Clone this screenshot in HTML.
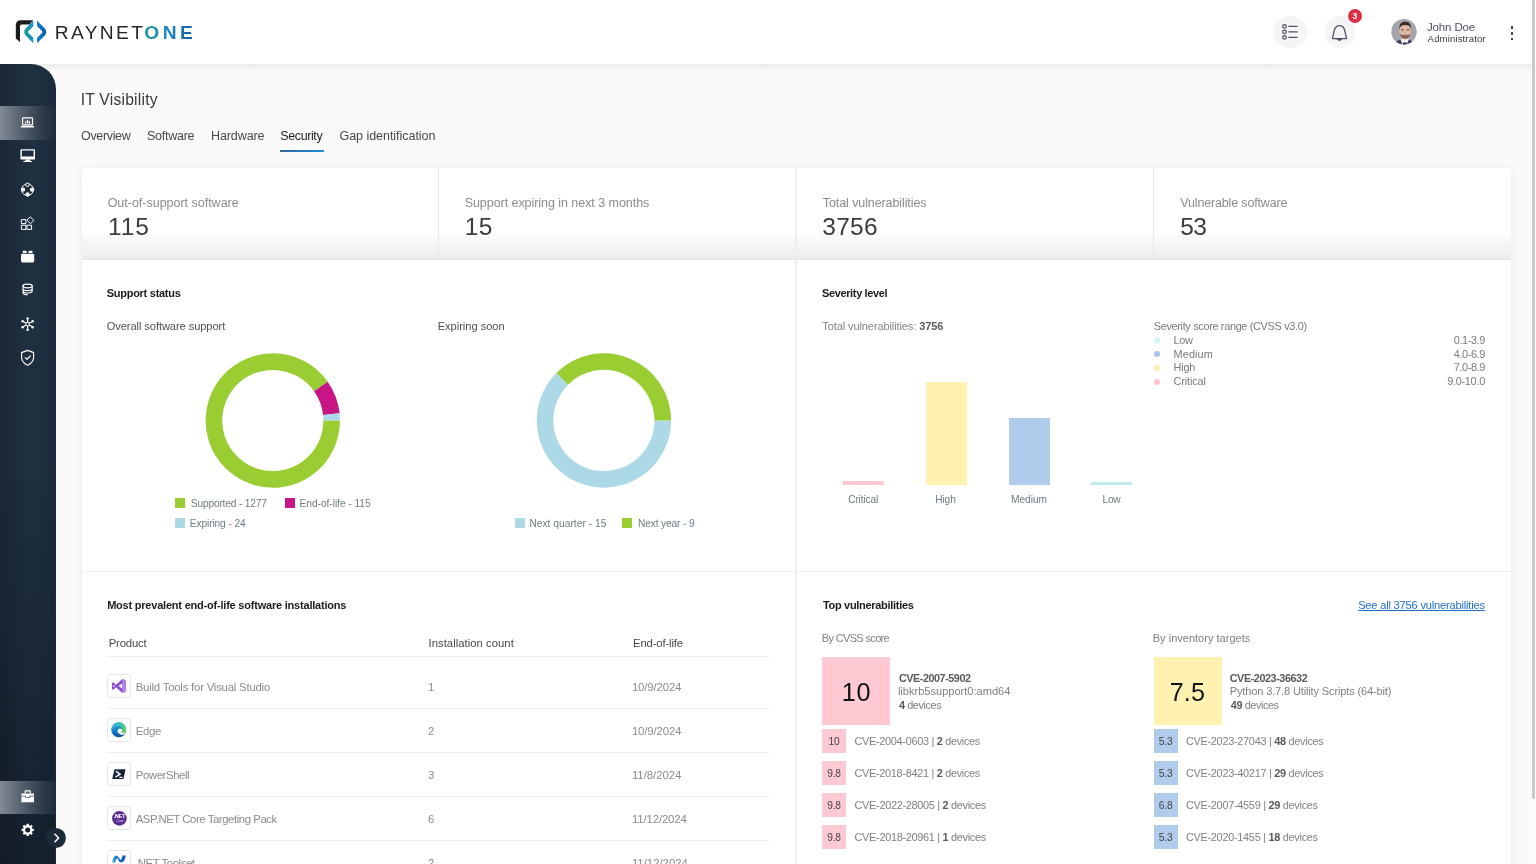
<!DOCTYPE html>
<html lang="en">
<head>
<meta charset="utf-8">
<title>IT Visibility - Security</title>
<style>
*{box-sizing:border-box;margin:0;padding:0}
html,body{width:1536px;height:864px;overflow:hidden}
body{position:relative;background:#fafafa;font-family:"Liberation Sans",sans-serif;color:#444;font-size:12px;line-height:1}
.a{position:absolute}
.t{position:absolute;white-space:nowrap;line-height:1;filter:blur(.3px)}
b{font-weight:700}
#hdr{position:absolute;left:0;top:0;width:1536px;height:64px;background:#fff;z-index:5}
#hdrshadow{position:absolute;left:0;top:64px;width:1536px;height:8px;background:linear-gradient(#eaeaea,#f2f2f2 40%,#fafafa);z-index:1}
#side{position:absolute;left:0;top:64px;width:55.6px;height:800px;background:linear-gradient(90deg,#1a2735 0%,#1f3042 55%,#1c2b3b 100%);border-top-right-radius:25px;z-index:6;overflow:hidden}
#side .fade{position:absolute;left:0;top:0;width:55px;height:800px;background:linear-gradient(180deg,rgba(0,0,0,0) 50%,rgba(12,18,26,.5) 100%)}
.hl{position:absolute;left:0;width:55.3px;height:33.8px;background:linear-gradient(90deg,#7f8a95 0%,#4c5865 48%,#293746 82%,#1f2e3d 100%)}
#card{position:absolute;left:81.6px;top:168.3px;width:1429.6px;height:720px;background:#fff;border-radius:3px 3px 0 0;box-shadow:0 1px 10px rgba(0,0,0,.07)}
.sum{position:absolute;left:81.6px;top:168.3px;width:1429.6px;height:90.7px;border-radius:3px 3px 0 0;background:linear-gradient(180deg,#fff 0%,#fff 68%,#ececec 100%)}
.vl{position:absolute;width:1px;background:#ececec}
.hln{position:absolute;height:1px;background:#efefef}
.sq{position:absolute;width:10px;height:10px}
.dot{position:absolute;width:6.4px;height:6.4px;border-radius:50%}
.pico{position:absolute;width:23.8px;height:23.8px;border:1.3px solid #e6e6e6;border-radius:3px;background:#fff;overflow:hidden}
.sb{position:absolute;width:24px;height:24px}
.bb{position:absolute;width:68px;height:68px}
svg{position:absolute;overflow:visible}
</style>
</head>
<body>
<div id="hdrshadow"></div>
<div id="hdr">
  <!-- logo mark -->
  <svg style="left:14px;top:18px" width="36" height="28" viewBox="14 18 36 28">
    <defs>
      <linearGradient id="lg1" gradientUnits="userSpaceOnUse" x1="24" y1="32" x2="33.3" y2="32"><stop offset="0" stop-color="#1a9690"/><stop offset=".45" stop-color="#1897ac"/><stop offset="1" stop-color="#1590cc"/></linearGradient>
      <linearGradient id="lg2" gradientUnits="userSpaceOnUse" x1="37.1" y1="32" x2="46.7" y2="32"><stop offset="0" stop-color="#1180cc"/><stop offset=".55" stop-color="#0c6cb8"/><stop offset="1" stop-color="#0a4f9a"/></linearGradient>
      <clipPath id="lc1"><rect x="20" y="18" width="13.3" height="28"/></clipPath>
      <clipPath id="lc2"><rect x="37.1" y="18" width="13" height="28"/></clipPath>
    </defs>
    <path d="M15.8 38.6 V25.6 Q15.8 20.25 21.1 20.25 H33.3 L29.4 24.4 H21.6 Q20 24.4 20 26 V42.1 Z" fill="#1c1c1c"/>
    <path d="M36 20.65 L26.97 29.85 A3 3 0 0 0 26.97 34.05 L36 43.25" fill="none" stroke="url(#lg1)" stroke-width="3.8" clip-path="url(#lc1)"/>
    <path d="M34.4 20.65 L43.43 29.85 A3 3 0 0 1 43.43 34.05 L34.4 43.25" fill="none" stroke="url(#lg2)" stroke-width="3.8" clip-path="url(#lc2)"/>
  </svg>
  <!-- list button -->
  <div class="a" style="left:1273px;top:16px;width:34.5px;height:32px;border-radius:50%;background:#f5f5f5"></div>
  <svg style="left:1280px;top:22px" width="20" height="20" viewBox="1280 22 20 20" fill="none" stroke="#4a5260" stroke-width="1.25">
    <circle cx="1284.5" cy="26.3" r="1.8"/><circle cx="1284.5" cy="31.8" r="1.8"/><circle cx="1284.5" cy="37.4" r="1.8"/>
    <path d="M1288.3 26.3H1297.6M1288.3 31.8H1297.6M1288.3 37.4H1297.6"/>
  </svg>
  <!-- bell button -->
  <div class="a" style="left:1323.5px;top:16px;width:32px;height:32px;border-radius:50%;background:#f5f5f5"></div>
  <svg style="left:1330px;top:23px" width="20" height="20" viewBox="1330 23 20 20" fill="none" stroke="#4a5260" stroke-width="1.3" stroke-linejoin="round">
    <path d="M1333.4 38.6 Q1332.2 38.6 1332.6 37.4 C1334.2 33.6 1333.4 25.6 1339.5 25.6 C1345.6 25.6 1344.8 33.6 1346.4 37.4 Q1346.8 38.6 1345.6 38.6 Z"/>
    <path d="M1337.6 39.2 Q1339.5 41.6 1341.4 39.2 Z" fill="#4a5260"/>
  </svg>
  <div class="a" style="left:1347.9px;top:9.1px;width:14px;height:14px;border-radius:50%;background:#dc2f45"></div>
  <!-- avatar -->
  <svg style="left:1390.6px;top:19px" width="26" height="26" viewBox="0 0 26 26">
    <defs><clipPath id="av"><circle cx="13" cy="12.8" r="12.7"/></clipPath><filter id="avb" x="-10%" y="-10%" width="120%" height="120%"><feGaussianBlur stdDeviation="0.45"/></filter></defs>
    <g clip-path="url(#av)">
      <rect width="26" height="26" fill="#a6a5ab"/>
      <g filter="url(#avb)">
      <path d="M3.6 26 Q5 21.6 9.4 20.6 L13.6 25 L17.6 20.6 Q21.4 21.4 22.6 26 Z" fill="#3a4258"/>
      <path d="M9.6 20.4 L10.6 19 H17 L17.8 20.4 L15.6 26 H11.6 Z" fill="#f1f2f5"/>
      <path d="M12.2 23.6 H15.6 L16.2 26 H11.8 Z" fill="#232b45"/>
      <rect x="11.2" y="16" width="5.6" height="4.2" fill="#c89f88"/>
      <ellipse cx="14.2" cy="12.8" rx="5.8" ry="7.1" fill="#e0b9a4"/>
      <path d="M8.3 11 Q7.4 3.2 14.2 2.6 Q21 3.2 20.1 11 Q19.6 7.4 17.8 6.6 Q14.2 5.6 10.6 6.6 Q8.8 7.4 8.3 11 Z" fill="#3b2a24"/>
      <path d="M8.7 13.6 Q9.2 19.4 14.2 19.8 Q19.2 19.4 19.7 13.6 Q18.6 16.6 16.6 16 Q14.2 15.2 11.8 16 Q9.8 16.6 8.7 13.6 Z" fill="#7a5545" opacity=".9"/>
      <path d="M12 16.6 Q14.2 18 16.4 16.6 Q14.2 17.2 12 16.6Z" fill="#f3e9e4"/>
      <path d="M10 10.9 H12.8 M15.6 10.9 H18.4" stroke="#5a4036" stroke-width="0.9" fill="none"/>
      </g>
    </g>
  </svg>
  <!-- kebab -->
  <div class="a" style="left:1510.7px;top:26.3px;width:2.6px;height:2.6px;background:#4a4a4a"></div>
  <div class="a" style="left:1510.7px;top:32px;width:2.6px;height:2.6px;background:#4a4a4a"></div>
  <div class="a" style="left:1510.7px;top:37.7px;width:2.6px;height:2.6px;background:#4a4a4a"></div>
</div>
<!-- scrollbar -->
<div class="a" style="left:1531.6px;top:64px;width:4.4px;height:800px;background:#fcfcfc;z-index:7"></div>
<div class="a" style="left:1532.2px;top:0;width:3px;height:799px;background:#c9c9c9;border-radius:0 0 2px 2px;z-index:8"></div>

<!-- sidebar -->
<div id="side">
  <div class="fade"></div>
  <div class="hl" style="top:42.1px"></div>
  <div class="hl" style="top:716.7px"></div>
</div>
<svg style="left:0;top:64px;z-index:7" width="70" height="800" viewBox="0 64 70 800">
  <g fill="none" stroke="#fff" stroke-width="1.2" stroke-linejoin="round" stroke-linecap="round">
    <!-- 1 laptop chart -->
    <rect x="22.6" y="117.8" width="9.9" height="7" rx="0.8"/>
    <path d="M21.7 126.7 H33.3" stroke-width="1.7"/>
    <path d="M25.6 123.4V121.4M27.5 123.4V120M29.4 123.4V121" stroke-width="1.3" stroke-linecap="butt"/>
    <!-- 3 ring nodes -->
    <circle cx="27.55" cy="189.7" r="5.9" stroke-width="0.95"/>
    <!-- 4 squares + diamond -->
    <g stroke-width="1"><rect x="21.7" y="219.6" width="4.2" height="4"/><rect x="21.7" y="225.2" width="4.2" height="4.2"/><rect x="27.3" y="225.2" width="4.3" height="4.2"/>
    <path d="M30.5 217.1 L33.8 220.4 L30.5 223.7 L27.2 220.4 Z"/></g>
    <!-- 6 database -->
    <ellipse cx="27.6" cy="286" rx="4.6" ry="1.8"/>
    <path d="M23 286 V292.6 Q23.2 294.6 27.6 294.8 M32.2 286 V291 M23 288.8 Q23.4 290.6 27.6 290.6 Q31.8 290.6 32.2 288.8 M23 291.2 Q23.4 293 27.6 293 Q31.8 293 32.2 291.2" stroke-width="1.1"/>
    <!-- 7 hub -->
    <path d="M27.6 319.4 V329 M23.6 321.8 L31.8 326.6 M23.6 326.6 L31.8 321.8" stroke-width="1.2"/>
    <!-- 8 shield -->
    <path d="M27.6 350.4 L33.6 352.6 V357.4 Q33.4 362.4 27.6 365.2 Q21.8 362.4 21.6 357.4 V352.6 Z" stroke-width="1.15"/>
    <path d="M25.2 357.6 L27 359.4 L30.2 356" stroke-width="1.15"/>
  </g>
  <g fill="#fff">
    <!-- 2 monitor -->
    <path d="M21.6 149.2 H33.8 Q35 149.2 35 150.4 V158.4 Q35 159.6 33.8 159.6 H21.6 Q20.4 159.6 20.4 158.4 V150.4 Q20.4 149.2 21.6 149.2 Z M21.8 150.6 V156.6 H33.6 V150.6 Z" fill-rule="evenodd"/>
    <path d="M25.6 159.6 H29.8 L30.4 161 H25 Z M23.4 161 H32 V161.9 H23.4 Z"/>
    <!-- 3 nodes -->
    <circle cx="23" cy="189.7" r="2.15"/><circle cx="32.1" cy="189.7" r="2.15"/><circle cx="27.55" cy="194.5" r="2.15"/>
    <circle cx="27.55" cy="184.8" r="1.75" fill="#1f3042" stroke="#fff" stroke-width="1"/>
    <!-- 5 lego -->
    <rect x="21" y="253.8" width="13.2" height="8.6" rx="1.4"/>
    <rect x="22.8" y="250.7" width="3.8" height="2.4" rx="0.5"/><rect x="28.6" y="250.7" width="3.8" height="2.4" rx="0.5"/>
    <!-- 7 hub nodes -->
    <circle cx="27.6" cy="324.2" r="1.7" fill="#1f3042" stroke="#fff" stroke-width="1"/>
    <circle cx="27.6" cy="318.4" r="1.2"/><circle cx="27.6" cy="329.9" r="1.2"/>
    <circle cx="22.6" cy="321.2" r="1.2"/><circle cx="32.7" cy="327.2" r="1.2"/>
    <circle cx="22.6" cy="327.2" r="1.2"/><circle cx="32.7" cy="321.2" r="1.2"/>
    <!-- 9 toolbox -->
    <path d="M21.4 793.4 H34 V795.8 H29.4 V797 H26 V795.8 H21.4 Z M21.4 796.6 H25.2 V797.8 H30.2 V796.6 H34 V802.3 H21.4 Z"/>
    <path d="M24.6 793.4 V791 Q24.6 790.3 25.3 790.3 H30.1 Q30.8 790.3 30.8 791 V793.4 H29.6 V791.5 H25.8 V793.4 Z"/>
    <!-- 10 gear -->
    <path fill-rule="evenodd" d="M32.23 828.65 L33.81 828.85 L33.81 830.95 L32.23 831.15 L31.79 832.22 L32.76 833.48 L31.28 834.96 L30.02 833.99 L28.95 834.43 L28.75 836.01 L26.65 836.01 L26.45 834.43 L25.38 833.99 L24.12 834.96 L22.64 833.48 L23.61 832.22 L23.17 831.15 L21.59 830.95 L21.59 828.85 L23.17 828.65 L23.61 827.58 L22.64 826.32 L24.12 824.84 L25.38 825.81 L26.45 825.37 L26.65 823.79 L28.75 823.79 L28.95 825.37 L30.02 825.81 L31.28 824.84 L32.76 826.32 L31.79 827.58 Z M30.20 829.90 A2.5 2.5 0 1 0 25.20 829.90 A2.5 2.5 0 1 0 30.20 829.90 Z"/>
  </g>
  <!-- expand -->
  <circle cx="55.8" cy="838" r="10.1" fill="#1c2a39"/>
  <path d="M54.6 833.8 L58.6 838 L54.6 842.2" fill="none" stroke="#fff" stroke-width="1.5"/>
</svg>
<!-- tab underline -->
<div class="a" style="left:280px;top:149.8px;width:44px;height:2.2px;background:linear-gradient(90deg,#35659a,#1b8fd8)"></div>
<div id="card"></div>
<div class="sum"></div>
<div class="hln" style="left:81.6px;top:259px;width:1429.6px;background:#e6e3e3"></div>
<div class="vl" style="left:438px;top:168px;height:91px;background:#e8e8e8"></div>
<div class="vl" style="left:1153px;top:168px;height:91px;background:#e8e8e8"></div>
<div class="vl" style="left:795.3px;top:168px;height:696px;width:1.4px;background:#eeeeee"></div>
<div class="hln" style="left:81.6px;top:571px;width:1429.6px;background:#eeeeee"></div>

<!-- donuts -->
<svg style="left:200px;top:348px" width="480" height="146" viewBox="200 348 480 146">
  <path d="M331.70 420.50 A58.9 58.9 0 1 1 320.85 386.43" fill="none" stroke="#9acd32" stroke-width="16.6"/>
<path d="M320.85 386.43 A58.9 58.9 0 0 1 331.37 414.24" fill="none" stroke="#c71585" stroke-width="16.6"/>
<path d="M331.37 414.24 A58.9 58.9 0 0 1 331.70 420.50" fill="none" stroke="#add8e6" stroke-width="16.6"/>
<path d="M662.80 420.50 A58.9 58.9 0 1 1 562.25 378.85" fill="none" stroke="#add8e6" stroke-width="16.6"/>
<path d="M562.25 378.85 A58.9 58.9 0 0 1 662.80 420.50" fill="none" stroke="#9acd32" stroke-width="16.6"/>
</svg>
<!-- legends -->
<div class="sq" style="left:175px;top:498px;background:#9acd32"></div>
<div class="sq" style="left:284.6px;top:498px;background:#c71585"></div>
<div class="sq" style="left:175px;top:518px;background:#add8e6"></div>
<div class="sq" style="left:514.5px;top:518.4px;background:#add8e6"></div>
<div class="sq" style="left:622.3px;top:518.4px;background:#9acd32"></div>

<!-- bars -->
<div class="a" style="left:843.2px;top:480.8px;width:40.8px;height:4px;background:#ffc9d3"></div>
<div class="a" style="left:925.5px;top:382.1px;width:41px;height:102.7px;background:#fff2b0"></div>
<div class="a" style="left:1008.8px;top:417.5px;width:41px;height:67.3px;background:#afccec"></div>
<div class="a" style="left:1091px;top:482.2px;width:41px;height:2.6px;background:#bdebef"></div>
<!-- severity dots -->
<div class="dot" style="left:1154px;top:337.2px;background:#d6f3f5"></div>
<div class="dot" style="left:1154px;top:351.1px;background:#a9c6ec"></div>
<div class="dot" style="left:1154px;top:364.7px;background:#fff0a8"></div>
<div class="dot" style="left:1154px;top:378.6px;background:#ffc2cf"></div>

<!-- table lines -->
<div class="hln" style="left:107px;top:656px;width:663px"></div>
<div class="hln" style="left:107px;top:708px;width:663px"></div>
<div class="hln" style="left:107px;top:752px;width:663px"></div>
<div class="hln" style="left:107px;top:796px;width:663px"></div>
<div class="hln" style="left:107px;top:840px;width:663px"></div>
<!-- product icons -->
<div class="pico" style="left:107.3px;top:674.1px">
  <svg style="left:2.9px;top:2.9px" width="16" height="16" viewBox="0 0 14 14"><path d="M10 0.8 L13 2.2 V11.8 L10 13.2 L4.4 8.2 L2 10.2 L0.8 9.6 V4.4 L2 3.8 L4.4 5.8 Z M10 4.6 L6.6 7 L10 9.4 Z M2.2 5.8 V8.2 L3.6 7 Z" fill="#8a4fd0" fill-rule="evenodd"/><path d="M10 0.8 L13 2.2 V11.8 L10 13.2 Z" fill="#b383ea"/></svg>
</div>
<div class="pico" style="left:107.3px;top:718.1px">
  <svg style="left:3.2px;top:3.3px" width="15.4" height="15.4" viewBox="0 0 15 15"><defs><linearGradient id="eg" x1="0.2" y1="0" x2="0.6" y2="1"><stop offset="0" stop-color="#36b6e8"/><stop offset=".55" stop-color="#1479c8"/><stop offset="1" stop-color="#0b4a94"/></linearGradient><linearGradient id="eg2" x1="0" y1="0.3" x2="1" y2="0.6"><stop offset="0" stop-color="#2fb4dc"/><stop offset=".6" stop-color="#3cc8a0"/><stop offset="1" stop-color="#5bd85c"/></linearGradient></defs><circle cx="7.5" cy="7.5" r="7.3" fill="url(#eg)"/><path d="M7.5 .2 A7.3 7.3 0 0 1 14.8 7.5 Q14.7 9.8 12.8 10.4 Q10.4 10.9 9.3 9.5 Q11.2 8.8 10.9 6.8 Q10.2 4 6.9 3.9 Q3.4 4 1 7 Q1.6 0.8 7.5 .2Z" fill="url(#eg2)"/><path d="M6.3 9 Q6.4 6.6 8.7 6.3 Q10.8 6.4 10.9 7.9 Q10.8 9.5 9.3 9.5 Q10.4 10.9 12.8 10.4 Q13.6 10.2 14.2 9.6 Q13 13.2 9.6 13.4 Q6.4 13 6.3 9Z" fill="#fff"/><path d="M6.3 9 Q6.3 12.4 9.2 13.6 Q11.6 14 13.4 12.2 Q11.2 13 9.2 12.2 Q7 11.2 6.3 9Z" fill="#0d4f9a"/></svg>
</div>
<div class="pico" style="left:107.3px;top:762.1px">
  <svg style="left:3.8px;top:5.6px" width="13.8" height="10.4" viewBox="0 0 14 10.5"><defs><linearGradient id="psg" x1="0" y1="0" x2="1" y2="1"><stop offset="0" stop-color="#2a4468"/><stop offset=".5" stop-color="#13213a"/><stop offset="1" stop-color="#0c1526"/></linearGradient></defs><path d="M2.4 0.3 H13.7 L11.6 10.2 H0.3 Z" fill="url(#psg)"/><path d="M4.2 2.3 L8.2 5.2 L3.5 8.2" fill="none" stroke="#fff" stroke-width="1.5"/><path d="M7.4 8.4 H10.8" stroke="#fff" stroke-width="1.3"/></svg>
</div>
<div class="pico" style="left:107.3px;top:806.1px">
  <svg style="left:3.8px;top:3.8px" width="14.8" height="14.8" viewBox="0 0 15 15"><circle cx="7.5" cy="7.5" r="7.4" fill="#5c2d91"/></svg>
  <div class="t" style="left:5.4px;top:7.2px;font-size:5.7px;font-weight:700;color:#fff;letter-spacing:-.42px">.NET</div>
  <div class="t" style="left:8.3px;top:12.5px;font-size:3.2px;color:#e6dcf2">Core</div>
</div>
<div class="pico" style="left:107.3px;top:850.1px">
  <svg style="left:3.7px;top:3.9px" width="14" height="8" viewBox="0 0 14 8"><defs><linearGradient id="ntg" x1="0" y1="0" x2="1" y2="0"><stop offset="0" stop-color="#2bb5d8"/><stop offset=".35" stop-color="#1a72c8"/><stop offset="1" stop-color="#1458b4"/></linearGradient></defs><path d="M0.2 7.6 Q1.4 0.4 4.4 0.6 Q6.2 0.8 7.6 3.8 Q8.2 5 8.8 4.8 Q9.8 4.4 10.6 0.6 H13.9 Q12.4 7.6 9.4 7.6 Q7.4 7.6 6 4.4 Q5.4 3.2 4.8 3.4 Q3.8 3.8 3.2 7.6 Z" fill="url(#ntg)"/></svg>
</div>

<!-- vuln boxes -->
<div class="bb" style="left:822px;top:657.2px;background:#ffc9d3"></div>
<div class="sb" style="left:822px;top:729px;background:#ffc9d3"></div>
<div class="sb" style="left:822px;top:761px;background:#ffc9d3"></div>
<div class="sb" style="left:822px;top:793px;background:#ffc9d3"></div>
<div class="sb" style="left:822px;top:825px;background:#ffc9d3"></div>
<div class="bb" style="left:1153.6px;top:657.2px;background:#fff2b0"></div>
<div class="sb" style="left:1153.6px;top:729px;background:#afccec"></div>
<div class="sb" style="left:1153.6px;top:761px;background:#afccec"></div>
<div class="sb" style="left:1153.6px;top:793px;background:#afccec"></div>
<div class="sb" style="left:1153.6px;top:825px;background:#afccec"></div>
<div class="t" id="title" style="top:92.01px;font-size:15.70px;color:#3a3a3a;left:80.66px;letter-spacing:0.214px;">IT Visibility</div>
<div class="t" id="tab1" style="top:130.01px;font-size:12.50px;color:#484848;left:81.05px;letter-spacing:-0.349px;">Overview</div>
<div class="t" id="tab2" style="top:130.01px;font-size:12.50px;color:#484848;left:147.05px;letter-spacing:-0.271px;">Software</div>
<div class="t" id="tab3" style="top:130.01px;font-size:12.50px;color:#484848;left:211.05px;letter-spacing:-0.105px;">Hardware</div>
<div class="t" id="tab4" style="top:130.01px;font-size:12.50px;color:#1f1f1f;left:280.25px;letter-spacing:-0.387px;">Security</div>
<div class="t" id="tab5" style="top:130.01px;font-size:12.50px;color:#484848;left:339.45px;letter-spacing:-0.032px;">Gap identification</div>
<div class="t" id="s1l" style="top:197.01px;font-size:12.50px;color:#8b8b8b;left:107.65px;letter-spacing:-0.012px;">Out-of-support software</div>
<div class="t" id="s1n" style="top:215.01px;font-size:24.50px;color:#3c3c3c;left:107.93px;letter-spacing:0.994px;">115</div>
<div class="t" id="s2l" style="top:197.01px;font-size:12.50px;color:#8b8b8b;left:464.65px;letter-spacing:-0.049px;">Support expiring in next 3 months</div>
<div class="t" id="s2n" style="top:215.01px;font-size:24.50px;color:#3c3c3c;left:464.73px;letter-spacing:0.384px;">15</div>
<div class="t" id="s3l" style="top:197.01px;font-size:12.50px;color:#8b8b8b;left:822.85px;letter-spacing:-0.098px;">Total vulnerabilities</div>
<div class="t" id="s3n" style="top:215.01px;font-size:24.50px;color:#3c3c3c;left:822.33px;letter-spacing:0.245px;">3756</div>
<div class="t" id="s4l" style="top:197.01px;font-size:12.50px;color:#8b8b8b;left:1180.25px;letter-spacing:-0.155px;">Vulnerable software</div>
<div class="t" id="s4n" style="top:215.01px;font-size:24.50px;color:#3c3c3c;left:1180.13px;letter-spacing:-0.416px;">53</div>
<div class="t" id="h1" style="top:288.00px;font-size:11.00px;color:#1c1c1c;font-weight:700;left:106.74px;letter-spacing:-0.271px;">Support status</div>
<div class="t" id="h1a" style="top:321.00px;font-size:11.10px;color:#505050;left:106.73px;letter-spacing:-0.075px;">Overall software support</div>
<div class="t" id="h1b" style="top:321.00px;font-size:11.10px;color:#505050;left:437.73px;letter-spacing:-0.026px;">Expiring soon</div>
<div class="t" id="lg1" style="top:499.01px;font-size:10.20px;color:#6c7e82;left:190.79px;letter-spacing:-0.168px;">Supported - 1277</div>
<div class="t" id="lg2" style="top:499.01px;font-size:10.20px;color:#6c7e82;left:299.59px;letter-spacing:-0.045px;">End-of-life - 115</div>
<div class="t" id="lg3" style="top:519.01px;font-size:10.20px;color:#6c7e82;left:189.79px;letter-spacing:-0.115px;">Expiring - 24</div>
<div class="t" id="lg4" style="top:519.01px;font-size:10.20px;color:#6c7e82;left:529.39px;letter-spacing:0.035px;">Next quarter - 15</div>
<div class="t" id="lg5" style="top:519.01px;font-size:10.20px;color:#6c7e82;left:637.99px;letter-spacing:-0.142px;">Next year - 9</div>
<div class="t" id="h2" style="top:288.00px;font-size:11.00px;color:#1c1c1c;font-weight:700;left:821.94px;letter-spacing:-0.357px;">Severity level</div>
<div class="t" id="h2a" style="top:321.00px;font-size:11.10px;color:#858585;left:822.33px;letter-spacing:-0.134px;">Total vulnerabilities: <b style="color:#5e5e5e">3756</b></div>
<div class="t" id="h2b" style="top:321.01px;font-size:10.90px;color:#7a7a7a;left:1153.75px;letter-spacing:-0.327px;">Severity score range (CVSS v3.0)</div>
<div class="t" id="sv1" style="top:335.00px;font-size:10.90px;color:#7a7a7a;left:1173.55px;letter-spacing:-0.300px;">Low</div>
<div class="t" id="sv2" style="top:349.01px;font-size:10.90px;color:#7a7a7a;left:1173.55px;letter-spacing:0.111px;">Medium</div>
<div class="t" id="sv3" style="top:362.01px;font-size:10.90px;color:#7a7a7a;left:1173.55px;letter-spacing:-0.172px;">High</div>
<div class="t" id="sv4" style="top:376.01px;font-size:10.90px;color:#7a7a7a;left:1173.55px;letter-spacing:-0.142px;">Critical</div>
<div class="t" id="sr1" style="top:335.00px;font-size:10.90px;color:#7a7a7a;left:1453.75px;letter-spacing:-0.403px;">0.1-3.9</div>
<div class="t" id="sr2" style="top:349.01px;font-size:10.90px;color:#7a7a7a;left:1453.75px;letter-spacing:-0.403px;">4.0-6.9</div>
<div class="t" id="sr3" style="top:362.01px;font-size:10.90px;color:#7a7a7a;left:1453.75px;letter-spacing:-0.403px;">7.0-8.9</div>
<div class="t" id="sr4" style="top:376.01px;font-size:10.90px;color:#7a7a7a;left:1447.15px;letter-spacing:-0.268px;">9.0-10.0</div>
<div class="t" id="bx1" style="top:495.00px;font-size:10.20px;color:#6c7e82;left:848.19px;letter-spacing:-0.160px;">Critical</div>
<div class="t" id="bx2" style="top:495.00px;font-size:10.20px;color:#6c7e82;left:935.19px;letter-spacing:-0.111px;">High</div>
<div class="t" id="bx3" style="top:495.00px;font-size:10.20px;color:#6c7e82;left:1010.99px;letter-spacing:-0.043px;">Medium</div>
<div class="t" id="bx4" style="top:495.00px;font-size:10.20px;color:#6c7e82;left:1102.59px;letter-spacing:-0.300px;">Low</div>
<div class="t" id="h3" style="top:600.01px;font-size:11.00px;color:#1c1c1c;font-weight:700;left:107.14px;letter-spacing:-0.210px;">Most prevalent end-of-life software installations</div>
<div class="t" id="th1" style="top:638.01px;font-size:11.30px;color:#484848;left:108.72px;letter-spacing:-0.168px;">Product</div>
<div class="t" id="th2" style="top:638.01px;font-size:11.30px;color:#484848;left:428.52px;letter-spacing:0.031px;">Installation count</div>
<div class="t" id="th3" style="top:638.01px;font-size:11.30px;color:#484848;left:633.12px;letter-spacing:-0.157px;">End-of-life</div>
<div class="t" id="h4" style="top:600.01px;font-size:11.00px;color:#1c1c1c;font-weight:700;left:822.94px;letter-spacing:-0.304px;">Top vulnerabilities</div>
<div class="t" id="lnk" style="top:600.00px;font-size:11.10px;color:#1c6fc4;left:1358.13px;letter-spacing:-0.188px;text-decoration:underline;">See all 3756 vulnerabilities</div>
<div class="t" id="v1" style="top:633.01px;font-size:11.00px;color:#808080;left:821.74px;letter-spacing:-0.650px;">By CVSS score</div>
<div class="t" id="v2" style="top:633.01px;font-size:11.00px;color:#808080;left:1152.74px;letter-spacing:0.015px;">By inventory targets</div>
<div class="t" id="big1" style="top:680.01px;font-size:25.20px;color:#111;left:841.69px;letter-spacing:0.689px;">10</div>
<div class="t" id="big2" style="top:680.01px;font-size:25.20px;color:#111;left:1169.69px;letter-spacing:0.152px;">7.5</div>
<div class="t" id="c1a" style="top:673.00px;font-size:10.80px;color:#5a5a5a;font-weight:700;left:898.95px;letter-spacing:-0.450px;">CVE-2007-5902</div>
<div class="t" id="c1b" style="top:686.00px;font-size:11.10px;color:#808080;left:897.93px;letter-spacing:-0.017px;">libkrb5support0:amd64</div>
<div class="t" id="c1c" style="top:700.02px;font-size:10.90px;color:#808080;left:898.95px;letter-spacing:-0.416px;"><b style="color:#5a5a5a">4</b> devices</div>
<div class="t" id="c2a" style="top:673.00px;font-size:10.80px;color:#5a5a5a;font-weight:700;left:1229.75px;letter-spacing:-0.427px;">CVE-2023-36632</div>
<div class="t" id="c2b" style="top:686.00px;font-size:11.10px;color:#808080;left:1229.73px;letter-spacing:-0.166px;">Python 3.7.8 Utility Scripts (64-bit)</div>
<div class="t" id="c2c" style="top:700.02px;font-size:10.90px;color:#808080;left:1230.75px;letter-spacing:-0.421px;"><b style="color:#5a5a5a">49</b> devices</div>
<div class="t" id="r0n" style="top:682.01px;font-size:11.40px;color:#8b8b8b;left:135.72px;letter-spacing:-0.223px;">Build Tools for Visual Studio</div>
<div class="t" id="r0c" style="top:682.01px;font-size:11.40px;color:#8b8b8b;left:427.92px;">1</div>
<div class="t" id="r0d" style="top:682.01px;font-size:11.40px;color:#8b8b8b;left:631.92px;letter-spacing:-0.143px;">10/9/2024</div>
<div class="t" id="r1n" style="top:726.01px;font-size:11.40px;color:#8b8b8b;left:135.72px;letter-spacing:-0.300px;">Edge</div>
<div class="t" id="r1c" style="top:726.01px;font-size:11.40px;color:#8b8b8b;left:427.92px;">2</div>
<div class="t" id="r1d" style="top:726.01px;font-size:11.40px;color:#8b8b8b;left:631.92px;letter-spacing:-0.143px;">10/9/2024</div>
<div class="t" id="r2n" style="top:770.01px;font-size:11.40px;color:#8b8b8b;left:135.72px;letter-spacing:-0.409px;">PowerShell</div>
<div class="t" id="r2c" style="top:770.01px;font-size:11.40px;color:#8b8b8b;left:427.92px;">3</div>
<div class="t" id="r2d" style="top:770.01px;font-size:11.40px;color:#8b8b8b;left:631.92px;letter-spacing:-0.036px;">11/8/2024</div>
<div class="t" id="r3n" style="top:814.01px;font-size:11.40px;color:#8b8b8b;left:135.72px;letter-spacing:-0.450px;">ASP.NET Core Targeting Pack</div>
<div class="t" id="r3c" style="top:814.01px;font-size:11.40px;color:#8b8b8b;left:427.92px;">6</div>
<div class="t" id="r3d" style="top:814.01px;font-size:11.40px;color:#8b8b8b;left:631.92px;letter-spacing:-0.137px;">11/12/2024</div>
<div class="t" id="r4n" style="top:858.01px;font-size:11.40px;color:#8b8b8b;left:135.12px;letter-spacing:-0.450px;">.NET Toolset</div>
<div class="t" id="r4c" style="top:858.01px;font-size:11.40px;color:#8b8b8b;left:427.92px;">2</div>
<div class="t" id="r4d" style="top:858.01px;font-size:11.40px;color:#8b8b8b;left:631.92px;letter-spacing:-0.026px;">11/12/2024</div>
<div class="t" id="l0s" style="top:737.01px;font-size:10.20px;color:#444;left:822px;width:24px;text-align:center;letter-spacing:-.2px;">10</div>
<div class="t" id="l0t" style="top:736.01px;font-size:10.90px;color:#808080;left:854.55px;letter-spacing:-0.305px;">CVE-2004-0603 | <b style="color:#5a5a5a">2</b> devices</div>
<div class="t" id="l1s" style="top:769.01px;font-size:10.20px;color:#444;left:822px;width:24px;text-align:center;letter-spacing:-.2px;">9.8</div>
<div class="t" id="l1t" style="top:768.01px;font-size:10.90px;color:#808080;left:854.55px;letter-spacing:-0.305px;">CVE-2018-8421 | <b style="color:#5a5a5a">2</b> devices</div>
<div class="t" id="l2s" style="top:801.01px;font-size:10.20px;color:#444;left:822px;width:24px;text-align:center;letter-spacing:-.2px;">9.8</div>
<div class="t" id="l2t" style="top:800.01px;font-size:10.90px;color:#808080;left:854.55px;letter-spacing:-0.295px;">CVE-2022-28005 | <b style="color:#5a5a5a">2</b> devices</div>
<div class="t" id="l3s" style="top:833.01px;font-size:10.20px;color:#444;left:822px;width:24px;text-align:center;letter-spacing:-.2px;">9.8</div>
<div class="t" id="l3t" style="top:832.01px;font-size:10.90px;color:#808080;left:854.55px;letter-spacing:-0.295px;">CVE-2018-20961 | <b style="color:#5a5a5a">1</b> devices</div>
<div class="t" id="q0s" style="top:737.01px;font-size:10.20px;color:#444;left:1153.6px;width:24px;text-align:center;letter-spacing:-.2px;">5.3</div>
<div class="t" id="q0t" style="top:736.01px;font-size:10.90px;color:#808080;left:1185.95px;letter-spacing:-0.278px;">CVE-2023-27043 | <b style="color:#5a5a5a">48</b> devices</div>
<div class="t" id="q1s" style="top:769.01px;font-size:10.20px;color:#444;left:1153.6px;width:24px;text-align:center;letter-spacing:-.2px;">5.3</div>
<div class="t" id="q1t" style="top:768.01px;font-size:10.90px;color:#808080;left:1185.95px;letter-spacing:-0.278px;">CVE-2023-40217 | <b style="color:#5a5a5a">29</b> devices</div>
<div class="t" id="q2s" style="top:801.01px;font-size:10.20px;color:#444;left:1153.6px;width:24px;text-align:center;letter-spacing:-.2px;">6.8</div>
<div class="t" id="q2t" style="top:800.01px;font-size:10.90px;color:#808080;left:1185.95px;letter-spacing:-0.279px;">CVE-2007-4559 | <b style="color:#5a5a5a">29</b> devices</div>
<div class="t" id="q3s" style="top:833.01px;font-size:10.20px;color:#444;left:1153.6px;width:24px;text-align:center;letter-spacing:-.2px;">5.3</div>
<div class="t" id="q3t" style="top:832.01px;font-size:10.90px;color:#808080;left:1185.95px;letter-spacing:-0.279px;">CVE-2020-1455 | <b style="color:#5a5a5a">18</b> devices</div>
<div class="a" style="left:0;top:0;z-index:9">
<div class="t" id="logoR" style="top:22.60px;font-size:19.20px;color:#262626;left:54.75px;letter-spacing:2.360px;">RAYNET</div>
<div class="t" id="logoO" style="top:22.60px;font-size:19.20px;color:#1a7fc0;font-weight:700;left:144.25px;letter-spacing:3.500px;background:linear-gradient(90deg,#1a9a9c 0%,#1a84c8 50%,#1458a6 100%);-webkit-background-clip:text;background-clip:text;color:transparent;">ONE</div>
<div class="t" id="jd" style="top:21.50px;font-size:11.50px;color:#4a5160;left:1426.91px;letter-spacing:-0.126px;">John Doe</div>
<div class="t" id="adm" style="top:34.01px;font-size:9.60px;color:#3a3a3a;left:1427.62px;letter-spacing:0.120px;">Administrator</div>
<div class="t" id="badge" style="top:12.01px;font-size:8.60px;color:#fff;font-weight:700;left:1347.9px;width:14px;text-align:center;">3</div>
</div>
</body>
</html>
